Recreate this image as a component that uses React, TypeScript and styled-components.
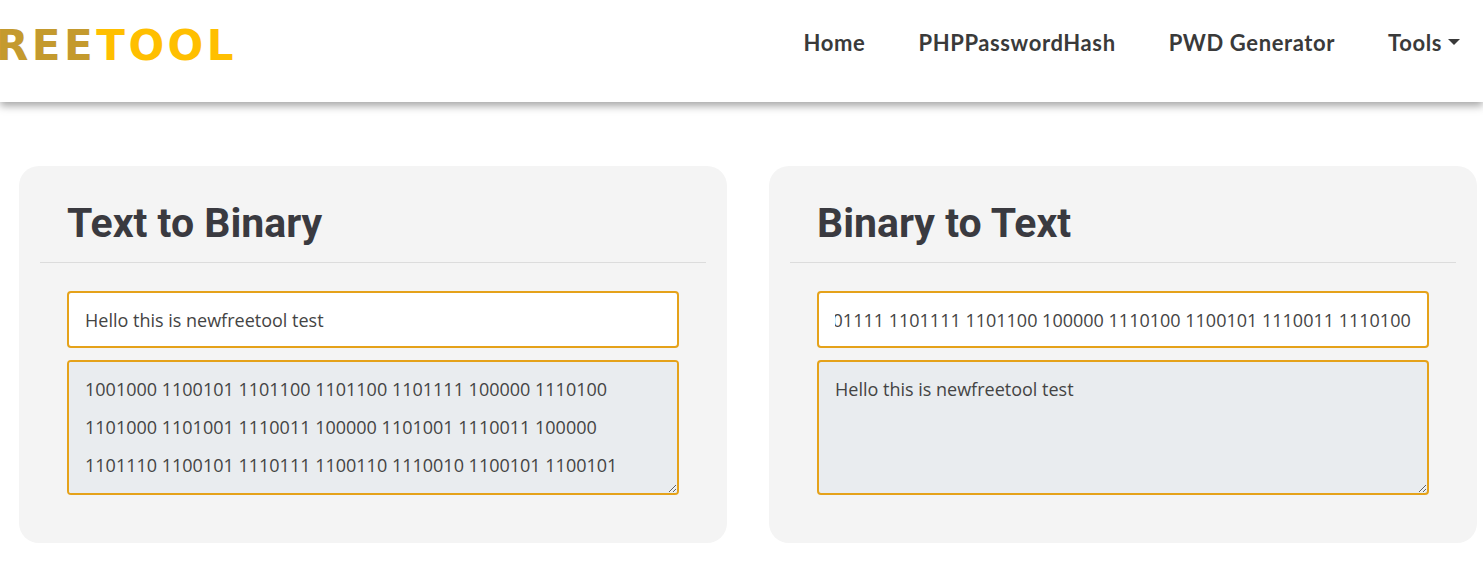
import React, { useEffect, useRef } from "react";
import styled, { createGlobalStyle } from "styled-components";

const G = createGlobalStyle`
  body { margin: 0; background: #fff; font-family: "Open Sans", "Noto Sans", sans-serif; overflow: hidden; }
`;

const Header = styled.header`
  height: 102px; display: flex; align-items: center; justify-content: space-between;
  background: #fff; box-shadow: 0 4px 8px rgba(0,0,0,0.35); position: relative; z-index: 1;
`;
const Logo = styled.div`
  font-family: "DejaVu Sans", sans-serif; font-weight: 900; font-size: 42px; letter-spacing: 3.5px;
  margin-top: -12px; margin-left: -4px; white-space: nowrap;
`;
const Part = styled.span<{ $c: string }>` color: ${p => p.$c}; `;
const Nav = styled.nav` display: flex; gap: 53px; padding-right: 23px; margin-top: -18px; `;
const NavItem = styled.a`
  font-family: "Lato", sans-serif; font-weight: 700; font-size: 22px; letter-spacing: 0.6px; color: #3a3a3a;
  display: flex; align-items: center; gap: 6px;
`;
const Caret = styled.span`
  width: 0; height: 0; border-left: 6px solid transparent; border-right: 6px solid transparent; border-top: 6px solid #3a3a3a;
`;
const Main = styled.main`
  display: grid; grid-template-columns: 708px 708px; gap: 42px; padding: 64px 0 0 19px;
`;
const Card = styled.section`
  background: #f4f4f4; border-radius: 20px; height: 377px; padding: 0 21px; box-sizing: border-box;
`;
const Title = styled.h2`
  margin: 0; font-family: "Roboto", sans-serif; font-weight: 700; font-size: 41px; color: #3a3a40;
  padding: 33px 0 15px 27px; border-bottom: 1px solid #dcdcdc;
`;
const Body = styled.div` padding: 28px 27px 0 27px; display: flex; flex-direction: column; gap: 12px; `;
const Input = styled.input`
  height: 57px; box-sizing: border-box; border: 2px solid #e5a21a; border-radius: 4px; background: #fff;
  padding: 0 16px; font: 18px "Open Sans", sans-serif; color: #444; outline: none; width: 100%;
`;
const Area = styled.textarea`
  height: 135px; box-sizing: border-box; border: 2px solid #e5a21a; border-radius: 4px; background: #e9ecef;
  padding: 8px 16px; font: 18px/38px "Open Sans", sans-serif; color: #444; outline: none; width: 100%;
  resize: vertical; overflow-y: scroll;
`;

const bin = "1001000 1100101 1101100 1101100 1101111 100000 1110100 1101000 1101001 1110011 100000 1101001 1110011 100000 1101110 1100101 1110111 1100110 1110010 1100101 1100101 1110100 1101111 1101111 1101100 100000 1110100 1100101 1110011 1110100";

export default function App() {
  const r = useRef<HTMLInputElement>(null);
  useEffect(() => { if (r.current) r.current.scrollLeft = 99999; }, []);
  return (
    <>
      <G />
      <Header>
        <Logo><Part $c="#c49a2e">REE</Part><Part $c="#ffbf00">TOOL</Part></Logo>
        <Nav>
          <NavItem>Home</NavItem>
          <NavItem>PHPPasswordHash</NavItem>
          <NavItem>PWD Generator</NavItem>
          <NavItem>Tools <Caret /></NavItem>
        </Nav>
      </Header>
      <Main>
        <Card>
          <Title>Text to Binary</Title>
          <Body>
            <Input defaultValue="Hello this is newfreetool test" />
            <Area defaultValue={bin} readOnly />
          </Body>
        </Card>
        <Card>
          <Title>Binary to Text</Title>
          <Body>
            <Input ref={r} defaultValue={bin} />
            <Area defaultValue="Hello this is newfreetool test" readOnly />
          </Body>
        </Card>
      </Main>
    </>
  );
}
